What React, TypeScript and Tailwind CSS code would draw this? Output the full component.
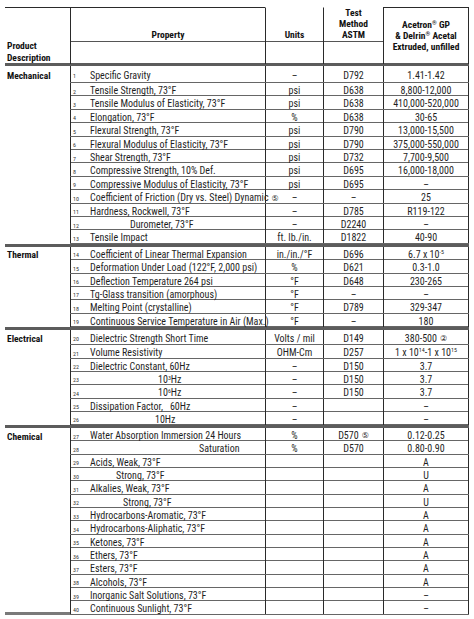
import React from 'react';

type Row = {
  n: number;
  prop: React.ReactNode;
  pad?: string;
  unit?: React.ReactNode;
  test?: React.ReactNode;
  val: React.ReactNode;
};

const Sup = ({ children }: { children: React.ReactNode }) => (
  <span className="relative -top-[3px] text-[6px] leading-none">{children}</span>
);

const Circ = ({ children }: { children: React.ReactNode }) => (
  <span className="ml-[3px] font-['DejaVu_Sans','Noto_Sans_CJK_SC',sans-serif] text-[8px] text-[#222]">{children}</span>
);

const mech: Row[] = [
  { n: 1, prop: 'Specific Gravity', unit: '–', test: 'D792', val: '1.41-1.42' },
  { n: 2, prop: 'Tensile Strength, 73°F', unit: 'psi', test: 'D638', val: '8,800-12,000' },
  { n: 3, prop: 'Tensile Modulus of Elasticity, 73°F', unit: 'psi', test: 'D638', val: '410,000-520,000' },
  { n: 4, prop: 'Elongation, 73°F', unit: '%', test: 'D638', val: '30-65' },
  { n: 5, prop: 'Flexural Strength, 73°F', unit: 'psi', test: 'D790', val: '13,000-15,500' },
  { n: 6, prop: 'Flexural Modulus of Elasticity, 73°F', unit: 'psi', test: 'D790', val: '375,000-550,000' },
  { n: 7, prop: 'Shear Strength, 73°F', unit: 'psi', test: 'D732', val: '7,700-9,500' },
  { n: 8, prop: 'Compressive Strength, 10% Def.', unit: 'psi', test: 'D695', val: '16,000-18,000' },
  { n: 9, prop: 'Compressive Modulus of Elasticity, 73°F', unit: 'psi', test: 'D695', val: '–' },
  {
    n: 10,
    prop: (
      <>
        Coefficient of Friction (Dry vs. Steel) Dynamic<Circ>⑤</Circ>
      </>
    ),
    unit: '–',
    test: '–',
    val: '25',
  },
  { n: 11, prop: 'Hardness, Rockwell, 73°F', unit: '–', test: 'D785', val: 'R119-122' },
  { n: 12, prop: 'Durometer, 73°F', pad: 'pl-[40px]', unit: '–', test: 'D2240', val: '–' },
  { n: 13, prop: 'Tensile Impact', unit: 'ft. lb./in.', test: 'D1822', val: '40-90' },
];

const thermal: Row[] = [
  {
    n: 14,
    prop: 'Coefficient of Linear Thermal Expansion',
    unit: 'in./in./°F',
    test: 'D696',
    val: (
      <>
        6.7 x 10<Sup>-5</Sup>
      </>
    ),
  },
  { n: 15, prop: 'Deformation Under Load (122°F, 2,000 psi)', unit: '%', test: 'D621', val: '0.3-1.0' },
  { n: 16, prop: 'Deflection Temperature 264 psi', unit: '°F', test: 'D648', val: '230-265' },
  { n: 17, prop: 'Tg-Glass transition (amorphous)', unit: '°F', test: '–', val: '–' },
  { n: 18, prop: 'Melting Point (crystalline)', unit: '°F', test: 'D789', val: '329-347' },
  { n: 19, prop: 'Continuous Service Temperature in Air (Max.)', unit: '°F', test: '–', val: '180' },
];

const electrical: Row[] = [
  {
    n: 20,
    prop: 'Dielectric Strength Short Time',
    unit: 'Volts / mil',
    test: 'D149',
    val: (
      <>
        380-500<Circ>②</Circ>
      </>
    ),
  },
  {
    n: 21,
    prop: 'Volume Resistivity',
    unit: 'OHM-Cm',
    test: 'D257',
    val: (
      <>
        1 x 10<Sup>14</Sup>-1 x 10<Sup>15</Sup>
      </>
    ),
  },
  { n: 22, prop: 'Dielectric Constant, 60Hz', unit: '–', test: 'D150', val: '3.7' },
  {
    n: 23,
    prop: (
      <>
        10<Sup>3</Sup>Hz
      </>
    ),
    pad: 'pl-[68px]',
    unit: '–',
    test: 'D150',
    val: '3.7',
  },
  {
    n: 24,
    prop: (
      <>
        10<Sup>6</Sup>Hz
      </>
    ),
    pad: 'pl-[68px]',
    unit: '–',
    test: 'D150',
    val: '3.7',
  },
  {
    n: 25,
    prop: (
      <>
        Dissipation Factor,<span className="ml-[7px]">60Hz</span>
      </>
    ),
    unit: '–',
    test: '',
    val: '–',
  },
  { n: 26, prop: '10Hz', pad: 'pl-[65px]', unit: '–', test: '', val: '–' },
];

const chemical: Row[] = [
  {
    n: 27,
    prop: 'Water Absorption Immersion 24 Hours',
    unit: '%',
    test: (
      <>
        D570<Circ>⑤</Circ>
      </>
    ),
    val: '0.12-0.25',
  },
  { n: 28, prop: 'Saturation', pad: 'pl-[109px]', unit: '%', test: 'D570', val: '0.80-0.90' },
  { n: 29, prop: 'Acids, Weak, 73°F', val: 'A' },
  { n: 30, prop: 'Strong, 73°F', pad: 'pl-[26px]', val: 'U' },
  { n: 31, prop: 'Alkalies, Weak, 73°F', val: 'A' },
  { n: 32, prop: 'Strong, 73°F', pad: 'pl-[33px]', val: 'U' },
  { n: 33, prop: 'Hydrocarbons-Aromatic, 73°F', val: 'A' },
  { n: 34, prop: 'Hydrocarbons-Aliphatic, 73°F', val: 'A' },
  { n: 35, prop: 'Ketones, 73°F', val: 'A' },
  { n: 36, prop: 'Ethers, 73°F', val: 'A' },
  { n: 37, prop: 'Esters, 73°F', val: 'A' },
  { n: 38, prop: 'Alcohols, 73°F', val: 'A' },
  { n: 39, prop: 'Inorganic Salt Solutions, 73°F', val: '–' },
  { n: 40, prop: 'Continuous Sunlight, 73°F', val: '–' },
];

function DataRow({ r, h }: { r: Row; h: string }) {
  return (
    <div className={`grid grid-cols-[195px_58px_60px_86px] border-b border-b-[#666] ${h}`}>
      <div className="flex items-center whitespace-nowrap border-l border-l-[#2a2a2a] pt-[3px]">
        <span className="w-[19px] shrink-0 pl-[2px] pt-[1px] text-[6px] leading-none text-[#333]">{r.n}</span>
        <span className={`leading-none ${r.pad ?? ''}`}>{r.prop}</span>
      </div>
      <div className="flex items-center justify-center whitespace-nowrap border-l border-l-[#2a2a2a] pt-[3px] leading-none">
        {r.unit}
      </div>
      <div className="flex items-center justify-center whitespace-nowrap border-l border-l-[#2a2a2a] pt-[3px] leading-none">
        {r.test}
      </div>
      <div className="flex items-center justify-center whitespace-nowrap border-x border-x-[#2a2a2a] pt-[3px] leading-none">
        {r.val}
      </div>
    </div>
  );
}

function Section({
  label,
  rows,
  h,
  firstH,
  top,
  bottom,
}: {
  label: string;
  rows: Row[];
  h: string;
  firstH: string;
  top?: boolean;
  bottom?: boolean;
}) {
  return (
    <div className={`grid grid-cols-[65px_399px] ${top ? 'border-t-[3px] border-t-[#5c5c5c]' : ''}`}>
      <div className={`${bottom ? 'border-b-[3px] border-b-[#7a7a7a]' : ''}`}>
        <div className={`flex items-center pl-[2px] pt-[3px] text-[9.5px] font-bold leading-none text-[#111] ${firstH}`}>
          {label}
        </div>
      </div>
      <div className="flex flex-col">
        {rows.map((r, i) => (
          <DataRow key={r.n} r={r} h={i === 0 ? firstH : h} />
        ))}
      </div>
    </div>
  );
}

export default function App() {
  return (
    <div className="min-h-[619px] w-[474px] bg-white pl-[5px] pt-[7px] font-['Roboto_Condensed','Arial_Narrow','Liberation_Sans_Narrow','DejaVu_Sans_Condensed',sans-serif] text-[10px] text-[#1f1f1f]">
      <div className="w-[464px]">
        {/* header */}
        <div className="grid h-[59px] grid-cols-[65px_195px_58px_60px_86px] border-b-[3px] border-b-[#5c5c5c]">
          <div className="flex flex-col border-t border-t-[#2a2a2a] pl-[2px] pt-[32px] text-[9.5px] font-bold leading-[12px] text-[#111]">
            <span>Product</span>
            <span>Description</span>
          </div>
          <div className="flex flex-col border-l border-t border-[#2a2a2a]">
            <div className="flex h-[34px] items-end justify-center border-b border-b-[#555] pb-[1px] text-[9.5px] font-bold leading-[11px] text-[#111]">
              Property
            </div>
          </div>
          <div className="flex flex-col border-l border-t border-l-[#2a2a2a] border-t-white">
            <div className="flex h-[34px] items-end justify-center border-b border-b-[#555] pb-[1px] text-[9.5px] font-bold leading-[11px] text-[#111]">
              Units
            </div>
          </div>
          <div className="flex flex-col border-l border-t border-l-[#2a2a2a] border-t-white">
            <div className="flex h-[34px] flex-col items-center justify-end border-b border-b-[#555] pb-[1px] text-[9.5px] font-bold leading-[11px] text-[#111]">
              <span>Test</span>
              <span>Method</span>
              <span>ASTM</span>
            </div>
          </div>
          <div className="flex flex-col items-center whitespace-nowrap border-x border-t border-[#2a2a2a] pt-[11px] text-[9.5px] font-bold leading-[11px] text-[#111]">
            <span>
              Acetron<Sup>®</Sup> GP
            </span>
            <span>
              &amp; Delrin<Sup>®</Sup> Acetal
            </span>
            <span>Extruded, unfilled</span>
          </div>
        </div>

        <Section label="Mechanical" rows={mech} h="h-[13.42px]" firstH="h-[17px]" />
        <Section label="Thermal" rows={thermal} h="h-[13.33px]" firstH="h-[13.33px]" top />
        <Section label="Electrical" rows={electrical} h="h-[13.3px]" firstH="h-[15.5px]" top />
        <Section label="Chemical" rows={chemical} h="h-[13.33px]" firstH="h-[13.33px]" top bottom />
      </div>
    </div>
  );
}
